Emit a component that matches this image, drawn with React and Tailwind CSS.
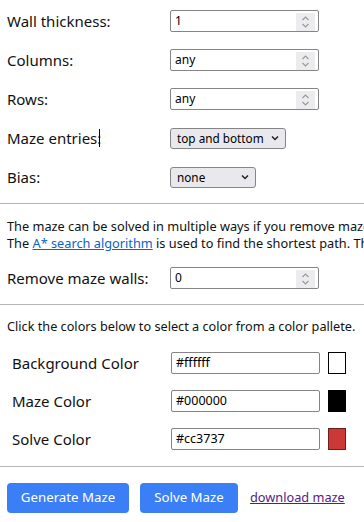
import { useState } from "react";

const font = { fontFamily: '"Noto Sans", "Open Sans", sans-serif' };

function Spinner() {
  return (
    <div className="absolute right-[3px] top-[2px] flex h-[18px] w-[19px] flex-col items-center justify-center bg-[#ececef]">
      <svg width="9" height="14" viewBox="0 0 9 14" fill="none" stroke="#9a9a9a" strokeWidth="1.2">
        <path d="M1.5 5 L4.5 2 L7.5 5" />
        <path d="M1.5 9 L4.5 12 L7.5 9" />
      </svg>
    </div>
  );
}

function NumberBox({ value }) {
  return (
    <div className="relative h-[22px] w-[149px] rounded-[2px] border border-[#858585] bg-white">
      <span className="absolute left-[4px] top-[1px] text-[12px] leading-[18px] text-black">{value}</span>
      <Spinner />
    </div>
  );
}

function SelectBox({ value, width }) {
  return (
    <div
      className={`flex h-[21px] items-center justify-between whitespace-nowrap rounded-[3px] border border-[#858585] bg-[#e9e9ed] pl-[6px] pr-[6px] ${width}`}
    >
      <span className="text-[11.75px] leading-[18px] text-black">{value}</span>
      <svg width="8" height="6" viewBox="0 0 8 6" fill="none" stroke="#222" strokeWidth="1.5">
        <path d="M1 1.5 L4 4.5 L7 1.5" />
      </svg>
    </div>
  );
}

function FormRow({ label, children }) {
  return (
    <div className="flex h-[22px] items-center">
      <div className="w-[163px] whitespace-nowrap text-[15px] text-[#111]">{label}</div>
      {children}
    </div>
  );
}

function ColorRow({ label, value, swatch, border }) {
  return (
    <div className="flex h-[22px] items-center">
      <div className="w-[164px] whitespace-nowrap pl-[5px] text-[15px] text-[#111]">{label}</div>
      <div className="flex h-[22px] w-[149px] items-center rounded-[2px] border border-[#858585] bg-white pl-[4px] text-[12.5px] text-black">
        {value}
      </div>
      <div className={`ml-[8px] h-[22px] w-[18px] border ${border} ${swatch}`} />
    </div>
  );
}

export default function App() {
  const [entries] = useState("top and bottom");

  return (
    <div className="h-[522px] w-[364px] overflow-hidden bg-white px-[7px] text-[#111]" style={font}>
      <div className="flex flex-col gap-[17px] pt-[10px]">
        <FormRow label="Wall thickness:">
          <NumberBox value="1" />
        </FormRow>
        <FormRow label="Columns:">
          <NumberBox value="any" />
        </FormRow>
        <FormRow label="Rows:">
          <NumberBox value="any" />
        </FormRow>
        <FormRow label={<span>Maze entries:<span className="ml-[-2px] inline-block h-[18px] w-px translate-y-[3px] bg-black" /></span>}>
          <SelectBox value={entries} width="w-[116px]" />
        </FormRow>
        <FormRow label="Bias:">
          <SelectBox value="none" width="w-[86px]" />
        </FormRow>
      </div>

      <hr className="-mx-[7px] mt-[15px] border-t border-[#b5b5b5]" />

      <div className="mt-[14px] whitespace-nowrap text-[12.75px] leading-[17px]">
        <p>The maze can be solved in multiple ways if you remove maze walls.</p>
        <p>
          The{" "}
          <a href="#" className="text-[#0b63c5] underline">
            A* search algorithm
          </a>{" "}
          is used to find the shortest path. This may take a while.
        </p>
      </div>

      <div className="mt-[15px]">
        <FormRow label="Remove maze walls:">
          <NumberBox value="0" />
        </FormRow>
      </div>

      <hr className="-mx-[7px] mt-[15px] border-t border-[#b5b5b5]" />

      <p className="mt-[13px] whitespace-nowrap text-[12.7px] leading-[17px]">
        Click the colors below to select a color from a color pallete.
      </p>

      <div className="mt-[17px] flex flex-col gap-[16px]">
        <ColorRow label="Background Color" value="#ffffff" swatch="bg-white" border="border-black" />
        <ColorRow label="Maze Color" value="#000000" swatch="bg-black" border="border-black" />
        <ColorRow label="Solve Color" value="#cc3737" swatch="bg-[#cc3737]" border="border-[#6b2020]" />
      </div>

      <hr className="-mx-[7px] mt-[16px] border-t border-[#b5b5b5]" />

      <div className="mt-[16px] flex items-center">
        <button className="h-[30px] w-[122px] rounded-[4px] bg-[#3b7ff6] text-[13.25px] text-white">
          Generate Maze
        </button>
        <button className="ml-[11px] h-[30px] w-[98px] rounded-[4px] bg-[#3b7ff6] text-[13.25px] text-white">
          Solve Maze
        </button>
        <a href="#" className="ml-[12px] whitespace-nowrap text-[12.75px] text-[#551a8b] underline">
          download maze
        </a>
      </div>
    </div>
  );
}
